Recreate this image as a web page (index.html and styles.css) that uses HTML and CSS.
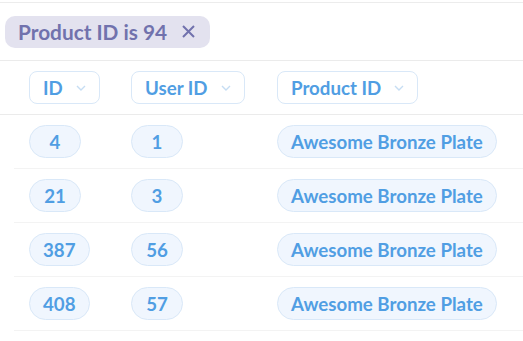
FILE: index.html
```html
<!DOCTYPE html>
<html>
<head>
<meta charset="utf-8">
<link rel="stylesheet" href="styles.css">
</head>
<body>
<div class="topline"></div>
<div class="filters">
  <div class="filter-pill">
    <span>Product ID is 94</span>
    <svg class="close" width="13" height="13" viewBox="0 0 13 13"><path d="M1 1 L12 12 M12 1 L1 12" stroke="currentColor" stroke-width="2" fill="none"/></svg>
  </div>
</div>
<div class="table">
  <div class="head">
    <div class="cell"><span class="hpill">ID<svg class="chev" width="10" height="6" viewBox="0 0 10 6"><path d="M1 1 L5 5 L9 1" stroke="currentColor" stroke-width="1.4" fill="none"/></svg></span></div>
    <div class="cell"><span class="hpill">User ID<svg class="chev" width="10" height="6" viewBox="0 0 10 6"><path d="M1 1 L5 5 L9 1" stroke="currentColor" stroke-width="1.4" fill="none"/></svg></span></div>
    <div class="cell"><span class="hpill">Product ID<svg class="chev" width="10" height="6" viewBox="0 0 10 6"><path d="M1 1 L5 5 L9 1" stroke="currentColor" stroke-width="1.4" fill="none"/></svg></span></div>
  </div>
  <div class="row">
    <div class="cell"><span class="pill">4</span></div>
    <div class="cell"><span class="pill">1</span></div>
    <div class="cell"><span class="pill">Awesome Bronze Plate</span></div>
  </div>
  <div class="row">
    <div class="cell"><span class="pill">21</span></div>
    <div class="cell"><span class="pill">3</span></div>
    <div class="cell"><span class="pill">Awesome Bronze Plate</span></div>
  </div>
  <div class="row">
    <div class="cell"><span class="pill">387</span></div>
    <div class="cell"><span class="pill">56</span></div>
    <div class="cell"><span class="pill">Awesome Bronze Plate</span></div>
  </div>
  <div class="row">
    <div class="cell"><span class="pill">408</span></div>
    <div class="cell"><span class="pill">57</span></div>
    <div class="cell"><span class="pill">Awesome Bronze Plate</span></div>
  </div>
</div>
</body>
</html>
```

FILE: styles.css
```css
html, body {
  margin: 0;
  padding: 0;
  background: #ffffff;
  font-family: Lato, "Open Sans", sans-serif;
  font-weight: 700;
}
.topline {
  margin-top: 2px;
  border-top: 1px solid #ececec;
}
.filters {
  height: 57px;
  display: flex;
  align-items: center;
  padding-left: 5px;
}
.filter-pill {
  display: flex;
  align-items: center;
  gap: 15px;
  height: 32px;
  box-sizing: border-box;
  padding: 0 15px 0 13px;
  border-radius: 10px;
  background: #e3e2ef;
  color: #7172ad;
  font-size: 20.8px;
}
.close {
  display: block;
  color: #7172ad;
}
.table {
  border-top: 1px solid #ebebeb;
}
.head, .row {
  display: grid;
  grid-template-columns: 102px 146px auto;
  align-items: center;
  height: 53px;
}
.head {
  padding-left: 29px;
  border-bottom: 1px solid #ebebeb;
}
.row {
  margin-left: 14px;
  padding-left: 15px;
  border-bottom: 1px solid #f3f3f3;
}
.cell {
  display: flex;
  align-items: center;
}
.hpill {
  display: inline-flex;
  align-items: center;
  gap: 13px;
  height: 33px;
  box-sizing: border-box;
  padding: 0 13px 0 13px;
  border: 1px solid #d9e8f8;
  border-radius: 8px;
  color: #509ee3;
  font-size: 18.7px;
}
.chev {
  display: block;
  color: #c6ddf3;
}
.pill {
  display: inline-flex;
  align-items: center;
  justify-content: center;
  min-width: 52px;
  height: 33px;
  box-sizing: border-box;
  padding: 0 13px;
  border: 1px solid #d9e8f8;
  border-radius: 17px;
  background: #f0f6fe;
  color: #509ee3;
  font-size: 18.7px;
}
```
